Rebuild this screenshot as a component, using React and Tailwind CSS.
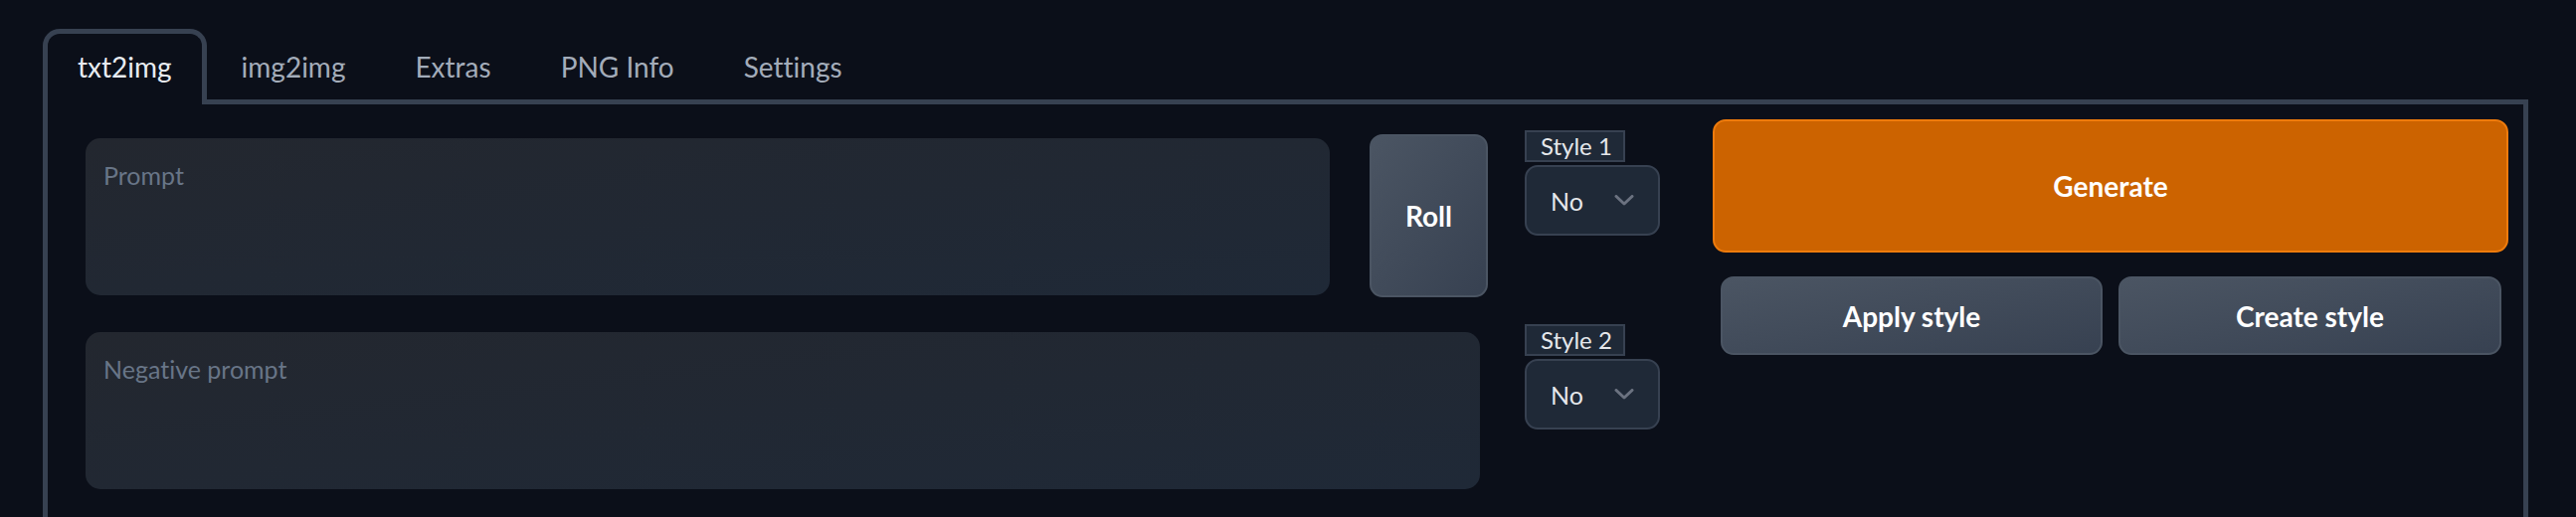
import React from "react";

const tabs = ["txt2img", "img2img", "Extras", "PNG Info", "Settings"];

const Chevron = () => (
  <svg width="20" height="11" viewBox="0 0 20 11" fill="none" className="shrink-0">
    <path d="M2 1.5 L10 9 L18 1.5" stroke="#6b7280" strokeWidth="3" strokeLinecap="round" strokeLinejoin="round" />
  </svg>
);

const StyleSelect = ({ label }) => (
  <div className="flex flex-col items-start">
    <div className="h-[32px] w-[101px] flex items-center pl-[14px] bg-[#1f2937] border-2 border-[#374151] text-[24px] text-[#e5e7eb] leading-none">
      {label}
    </div>
    <div className="mt-[3px] h-[71px] w-[136px] flex items-center pl-[24px] bg-[#1f2937] border-2 border-[#374151] rounded-[13px]">
      {/* the select is too narrow, so "None" is cut like in the real ui */}
      <div className="w-[34px] overflow-hidden whitespace-nowrap text-[25px] text-[#e5e7eb] leading-[1.2]">None</div>
      <div className="ml-[30px]">
        <Chevron />
      </div>
    </div>
  </div>
);

const GrayButton = ({ children, className }) => (
  <button
    className={
      "flex items-center justify-center rounded-[13px] border-2 border-[#4b5563] bg-linear-to-br from-[#4b5563] to-[#374151] text-white font-bold text-[28px] " +
      className
    }
  >
    {children}
  </button>
);

const App = () => {
  return (
    <div className="w-full h-[520px] overflow-hidden bg-[#0b0f19] font-[Lato,sans-serif] [font-variant-ligatures:none] pt-[29px] pl-[43px] pr-[48px]">
      {/* tab bar */}
      <div className="flex h-[76px]">
        <div className="h-[76px] flex items-center pb-[5px] px-[30px] border-t-[5px] border-x-[5px] border-[#374151] rounded-t-[17px] text-[28px] text-[#e8ecf2]">
          {tabs[0]}
        </div>
        <div className="flex-1 flex border-b-[5px] border-[#374151]">
          {tabs.slice(1).map((t) => (
            <div key={t} className="flex items-center pt-[5px] px-[35px] text-[28px] text-[#a3acb9]">
              {t}
            </div>
          ))}
        </div>
      </div>

      {/* panel */}
      <div className="h-[420px] border-x-[5px] border-[#374151] flex pl-[38px] pt-[15px]">
        <div className="flex flex-col">
          <div className="flex items-start">
            <div className="mt-[19px] w-[1251px] h-[158px] rounded-[15px] bg-linear-to-br from-[#23272f] to-[#1f2937] px-[18px] pt-[19px] text-[25px] leading-[1.5] text-[#687587]">
              Prompt
            </div>
            <GrayButton className="mt-[15px] ml-[40px] w-[119px] h-[164px]">Roll</GrayButton>
            <div className="mt-[11px] ml-[37px]">
              <StyleSelect label="Style 1" />
            </div>
          </div>
          <div className="flex items-start mt-[27px]">
            <div className="mt-[8px] w-[1402px] h-[158px] rounded-[15px] bg-linear-to-br from-[#23272f] to-[#1f2937] px-[18px] pt-[19px] text-[25px] leading-[1.5] text-[#687587]">
              Negative prompt
            </div>
            <div className="ml-[45px]">
              <StyleSelect label="Style 2" />
            </div>
          </div>
        </div>

        <div className="ml-[53px] flex flex-col">
          <button className="w-[800px] h-[134px] rounded-[13px] border-2 border-[#ee7b0c] bg-[#cc6300] text-white font-bold text-[28px]">
            Generate
          </button>
          <div className="mt-[24px] ml-[8px] flex gap-[16px]">
            <GrayButton className="w-[384px] h-[79px]">Apply style</GrayButton>
            <GrayButton className="w-[385px] h-[79px]">Create style</GrayButton>
          </div>
        </div>
      </div>
    </div>
  );
};

export default App;
